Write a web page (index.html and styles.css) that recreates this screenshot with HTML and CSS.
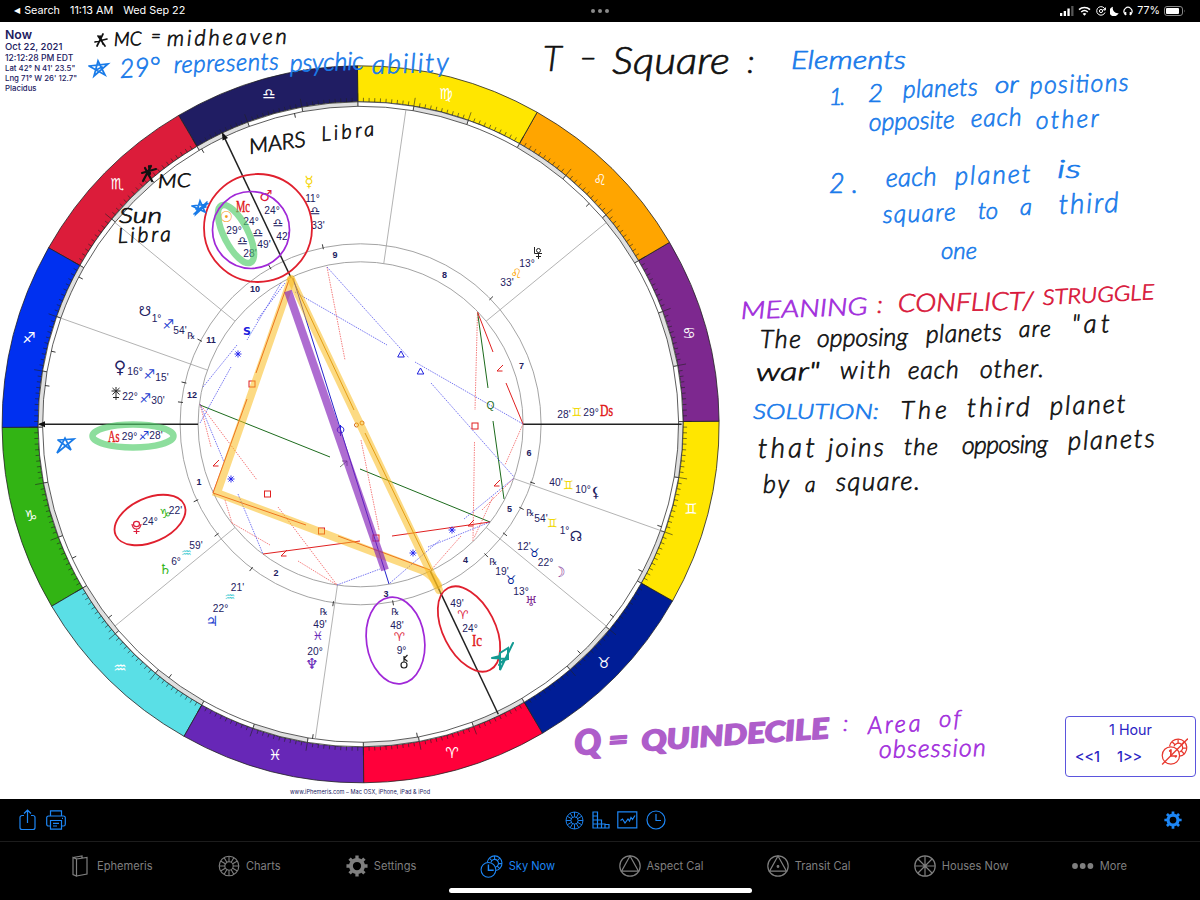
FILE: index.html
```
<!DOCTYPE html>
<html lang="en">

<head>
    <meta charset="UTF-8">
    <meta name="viewport" content="width=device-width, initial-scale=1.0">
    <title>Sky Now</title>
    <link rel="stylesheet" href="styles.css">
</head>

<body>
    <!-- shared icons -->
    <svg class="defs" width="0" height="0">
        <symbol id="wheel" viewBox="0 0 24 24">
            <g fill="none" stroke="currentColor">
                <circle cx="12" cy="12" r="10.7" />
                <circle cx="12" cy="12" r="4.6" />
                <path d="M12 1.3v6M12 16.7v6M1.3 12h6M16.7 12h6M6.6 2.8l3 5.2M14.4 16l3 5.2M2.8 6.6L8 9.6M16 14.4l5.2 3M2.8 17.4L8 14.4M16 9.6l5.2-3M6.6 21.2l3-5.2M14.4 8l3-5.2" />
            </g>
        </symbol>
        <symbol id="gear" viewBox="0 0 24 24">
            <circle cx="12" cy="12" r="6.6" fill="none" stroke="currentColor" stroke-width="4.2" />
            <path d="M12 0.5v4M12 19.5v4M0.5 12h4M19.5 12h4M3.9 3.9l2.8 2.8M17.3 17.3l2.8 2.8M3.9 20.1l2.8-2.8M17.3 6.7l2.8-2.8" stroke="currentColor" stroke-width="3.6" />
        </symbol>
        <symbol id="skynow" viewBox="0 0 24 24">
            <g fill="none" stroke="currentColor" stroke-width="1.1">
                <path d="M7.6 7.5A7.7 7.7 0 1 1 16.6 16.2" />
                <path d="M11.5 7.4A4 4 0 1 1 16.6 12.4" />
                <path d="M15.2 1v4M19 9h4M18 6l3-3M18 11.5l3 3M12.5 6l-2.5-2.5" />
                <circle cx="8.8" cy="15.5" r="7.7" />
                <path d="M8.8 10v6h5.5" stroke-width="1.5" />
            </g>
        </symbol>
    </svg>

    <header class="status-bar">
        <div class="status-left"><span class="back">◀</span><span>Search</span><span>11:13 AM</span><span>Wed Sep 22</span></div>
        <div class="dots"><i></i><i></i><i></i></div>
        <div class="status-right">
            <svg width="14" height="10" viewBox="0 0 14 10"><path d="M0 7h2.300v3H0zM3.700 5H6v5H3.700zM7.400 2.500h2.300V10H7.400z" fill="#fff" /><path d="M11.200 0h2.300v10h-2.300z" fill="#555" /></svg>
            <svg width="13" height="10" viewBox="0 0 13 10"><path d="M1 3.600a8 8 0 0 1 11 0M3.200 6a5 5 0 0 1 6.600 0" fill="none" stroke="#fff" stroke-width="1.500" /><path d="M6.500 9.800L4.600 7.800a2.800 2.800 0 0 1 3.800 0z" fill="#fff" /></svg>
            <svg width="10" height="10" viewBox="0 0 10 10"><path d="M9 6.500A4.300 4.300 0 1 1 9.200 4M9.600 1.500L9.200 4.200 6.700 3.500" fill="none" stroke="#fff" /><circle cx="5" cy="5" r="1.600" fill="none" stroke="#fff" /></svg>
            <svg width="9" height="10" viewBox="0 0 9 10"><path d="M3 .8A4.800 4.800 0 1 0 8.600 7 4.800 4.800 0 0 1 3 .8z" fill="#fff" /></svg>
            <svg width="10" height="10" viewBox="0 0 10 10"><path d="M3 9L1.600 7.500A4 4 0 1 1 8.400 7.500L7 9" fill="none" stroke="#fff" stroke-width="1.200" /><path d="M2.500 6v3M7.500 6v3" stroke="#fff" stroke-width="1.600" /></svg>
            <span>77%</span>
            <svg width="22" height="10" viewBox="0 0 22 10"><rect x=".5" y=".5" width="18" height="9" rx="2.500" fill="none" stroke="#888" /><rect x="2" y="2" width="13" height="6" rx="1" fill="#fff" /><path d="M20.200 3.500q1.200 1.500 0 3z" fill="#888" /></svg>
        </div>
    </header>

    <main class="canvas">
        <svg id="chart" class="chart" viewBox="0 22 1200 777">
            <g id="ring"></g>
            <g id="houses"></g>
            <g id="aspects"></g>
            <g id="labels"></g>
            <g id="marks" fill="none" stroke-linecap="round">
                <!-- highlighter -->
                <path class="yellow" d="M291 279L439 590" />
                <path class="yellow" d="M291 280L217 493L424 571Q434 577 438 585" />
                <path class="purple-hi" d="M288 291L385 570" />
                <ellipse class="green-hi" cx="236" cy="234" rx="12" ry="32" transform="rotate(-27 236 234)" />
                <ellipse class="green-hi" cx="133" cy="436" rx="40.500" ry="11.500" />
                <!-- pen circles -->
                <ellipse class="red-pen" cx="258" cy="228" rx="54" ry="54" />
                <ellipse class="violet-pen" cx="251" cy="230" rx="38.500" ry="38.500" />
                <ellipse class="red-pen" cx="150" cy="520" rx="37.500" ry="22" transform="rotate(-24 150 520)" />
                <ellipse class="red-pen" cx="469" cy="629" rx="26" ry="46" transform="rotate(-27 469 629)" />
                <ellipse class="violet-pen" cx="395.500" cy="640.500" rx="29" ry="43.500" transform="rotate(-8 395.500 640.500)" />
                <!-- stars -->
                <path class="blue-pen" d="M89 66L108 64L94 76L98 61L105 75L89 66M96 70l6-3" />
                <path class="blue-pen" d="M192 206L207 204L196 214L200 201L205 212L192 206M194 214L207 202M196 209L206 207" />
                <path class="blue-pen" d="M58 440L74 439L57 453L65 438L71 450L58 440" />
                <path class="teal-pen" d="M492 658L508 659L508 648L500 653L500 670L513 643M508 659Q502 660 499 665M492 658l8-2" />
                <path class="ink" d="M95 42L107 39M103 34L97 46M98 36L105 46M100 36l3 8" />
                <path class="ink bold" d="M142 173L156 169M151 166L143 181M145 168L152 181M149 166l1 8" />
            </g>
            <g id="notes"></g>
        </svg>

        <div class="info">
            <p class="now">Now</p>
            <p class="date">Oct 22, 2021</p>
            <p class="clock">12:12:28 PM EDT</p>
            <p>Lat 42° N 41' 23.5"</p>
            <p>Lng 71° W 26' 12.7"</p>
            <p>Placidus</p>
        </div>
        <p class="credit">www.iPhemeris.com – Mac OSX, iPhone, iPad &amp; iPod</p>
        <div class="stepper">
            <div class="step-title">1 Hour</div>
            <div class="step-row">
                <span>&lt;&lt;1</span><span>1&gt;&gt;</span>
                <svg class="step-icon" viewBox="0 0 24 24"><use href="#skynow" /><path d="M1 23.500L24 .5" stroke="currentColor" stroke-width="1.200" /><circle cx="8" cy="11.500" r="1" fill="currentColor" /><circle cx="13" cy="16.500" r="1" fill="currentColor" /></svg>
            </div>
        </div>
    </main>

    <div class="toolbar">
        <div class="tools">
            <svg width="17" height="22" viewBox="0 0 17 22"><path d="M5 6.500H3A2 2 0 0 0 1 8.500v10a2 2 0 0 0 2 2h11a2 2 0 0 0 2-2v-10a2 2 0 0 0-2-2h-2M8.500 14V1.200M5 4.500l3.500-3.500L12 4.500" /></svg>
            <svg width="20" height="20" viewBox="0 0 20 20"><path d="M4.500 6V.8h11V6M4.500 16H2.500a1.800 1.800 0 0 1-1.800-1.800V8A1.800 1.800 0 0 1 2.500 6h15a1.800 1.800 0 0 1 1.800 2v6.200a1.800 1.800 0 0 1-1.800 1.800h-2M4.500 10.500h11v8.700h-11zM7 13.300h6M7 16h4M16 8.300h1" /></svg>
        </div>
        <div class="tools center">
            <svg width="19" height="19"><use href="#wheel" /></svg>
            <svg width="18" height="18" viewBox="0 0 18 18"><path d="M1 1h4.500v16H1zM1 5h4.500M1 9h8.500v8M1 13h12v4M9.500 9v8H1M5.500 9v8M13 13v4H5.500M13 13.500h4V17h-4" /></svg>
            <svg width="21" height="18" viewBox="0 0 21 18"><path d="M.8.8h19v16H.8zM3.500 9.500l2-1.500 2.500 4 3-4 1.500 2 1.500-3.500 1.500 2L18 4.500" /></svg>
            <svg width="20" height="20" viewBox="0 0 20 20"><circle cx="10" cy="10" r="9" /><path d="M10 4v6.500h5" /></svg>
        </div>
        <svg class="gear" width="18" height="18"><use href="#gear" /></svg>
    </div>

    <nav class="tabs">
        <a><svg width="16" height="22" viewBox="0 0 16 22"><path d="M1 2.500L4.500 4v17L1 19.500zM4.500 4L15 2.500V19L4.500 21M1 2.500L10 1v2" /></svg>Ephemeris</a>
        <a><svg width="22" height="22"><use href="#wheel" /></svg>Charts</a>
        <a><svg width="22" height="22"><use href="#gear" /></svg>Settings</a>
        <a class="active"><svg width="23" height="23"><use href="#skynow" /></svg>Sky Now</a>
        <a><svg width="22" height="22" viewBox="0 0 22 22"><circle cx="11" cy="11" r="10.200" /><path d="M11 1L19.500 16.200H2.500z" /></svg>Aspect Cal</a>
        <a><svg width="22" height="22" viewBox="0 0 22 22"><circle cx="11" cy="11" r="10.200" /><path d="M11 1L19.500 16.200H2.500z" /><circle cx="11" cy="11.500" r=".8" /></svg>Transit Cal</a>
        <a><svg width="22" height="22" viewBox="0 0 22 22"><circle cx="11" cy="11" r="10.200" /><path d="M11 1v20M1 11h20M4 4l14 14M4 18L18 4" /></svg>Houses Now</a>
        <a><svg width="22" height="8" viewBox="0 0 22 8"><g fill="currentColor" stroke="none"><circle cx="3" cy="4" r="2.900" /><circle cx="10.700" cy="4" r="2.900" /><circle cx="18.400" cy="4" r="2.900" /></g></svg>More</a>
    </nav>
    <div class="home-bar"></div>
    <script src="chart.js"></script>
</body>

</html>
```
FILE: styles.css
```
:root {
    --blue: #1d86f5;
    --navy: #22205f;
    --gray: #7f7f7f;
}

body {
    width: 1200px;
    height: 900px;
    margin: 0;
    overflow: hidden;
    background: #000;
    font-family: Inter, "Liberation Sans", sans-serif;
    display: flex;
    flex-direction: column;
}

p {
    margin: 0;
}

.defs {
    position: absolute;
}

/* status bar */
.status-bar {
    height: 22px;
    display: grid;
    grid-template-columns: 1fr auto 1fr;
    align-items: center;
    color: #fff;
    font-size: 10.8px;
    box-sizing: border-box;
    padding: 0 14px 1px 14px;
}

.status-left {
    display: flex;
    align-items: center;
    gap: 10px;
}

.status-left .back {
    font-family: "DejaVu Sans", sans-serif;
    font-size: 8px;
    margin-right: -6px;
}

.dots {
    display: flex;
    gap: 3px;
}

.dots i {
    width: 4px;
    height: 4px;
    border-radius: 50%;
    background: #8a8a8a;
}

.status-right {
    display: flex;
    justify-content: flex-end;
    align-items: center;
    gap: 4.2px;
    font-size: 10.6px;
}

/* chart area */
.canvas {
    height: 777px;
    background: #fff;
    position: relative;
}

.chart {
    display: block;
    width: 1200px;
    height: 777px;
}

.info {
    position: absolute;
    left: 5px;
    top: 6px;
    color: var(--navy);
    font-size: 7.8px;
    font-weight: 500;
    line-height: 9.8px;
    white-space: nowrap;
}

.info .now {
    font-size: 12.3px;
    line-height: 13px;
    font-weight: 600;
}

.info .date {
    font-size: 9.5px;
    line-height: 12px;
}

.info .clock {
    font-size: 8.6px;
    line-height: 11px;
}

.credit {
    position: absolute;
    left: 290px;
    top: 766px;
    font-size: 5.6px;
    line-height: 8px;
    letter-spacing: 0.02px;
    color: var(--navy);
    white-space: nowrap;
}

.stepper {
    position: absolute;
    left: 1065px;
    top: 694px;
    width: 131px;
    height: 61px;
    box-sizing: border-box;
    border: 1.5px solid #5b55dd;
    border-radius: 4px;
    color: #2b25c4;
    font-size: 14.3px;
    padding: 4px 7px 0 9px;
}

.step-title {
    text-align: center;
    line-height: 17px;
    margin-right: 2px;
}

.step-row {
    display: flex;
    align-items: center;
    gap: 17px;
    font-weight: 500;
    height: 36px;
}

.step-icon {
    width: 27px;
    height: 27px;
    margin: -9px 0 0 auto;
    color: #e8392f;
}

/* drawing */
.yellow {
    stroke: rgba(250, 188, 30, 0.55);
    stroke-width: 8;
}

.purple-hi {
    stroke: rgba(130, 30, 185, 0.65);
    stroke-width: 8;
    stroke-linecap: butt;
}

.green-hi {
    stroke: rgba(80, 205, 105, 0.65);
    stroke-width: 6.5;
}

.red-pen {
    stroke: #e0202e;
    stroke-width: 1.8;
}

.violet-pen {
    stroke: #a028d8;
    stroke-width: 1.7;
}

.blue-pen {
    stroke: #197be8;
    stroke-width: 1.7;
}

.teal-pen {
    stroke: #129a92;
    stroke-width: 2;
}

.ink {
    stroke: #111;
    stroke-width: 1.7;
}

.ink.bold {
    stroke-width: 2.2;
}

.glyph {
    font-family: "DejaVu Sans", sans-serif;
    text-anchor: middle;
}

.num {
    font-family: "Liberation Sans", Arial, sans-serif;
    font-size: 10.2px;
    fill: var(--navy);
    text-anchor: middle;
}

.house {
    font-size: 9px;
    font-weight: bold;
}

.angle {
    font-family: "Liberation Serif", serif;
    font-size: 16px;
    fill: #e01515;
    stroke: #e01515;
    stroke-width: 0.4;
}

.hand {
    font-family: Lato, sans-serif;
    font-style: italic;
    font-weight: 300;
    stroke-width: 0.7;
    stroke-linejoin: round;
}

.marker {
    font-weight: 900;
    stroke-width: 1.5;
    opacity: 0.8;
}

/* bottom bars */
.toolbar {
    height: 43px;
    box-sizing: border-box;
    padding: 0 18px 0 19px;
    display: grid;
    grid-template-columns: 1fr auto 1fr;
    align-items: center;
    border-bottom: 1px solid #1c1c1c;
    color: var(--blue);
}

.toolbar svg,
.tabs svg {
    fill: none;
    stroke: currentColor;
    stroke-width: 1.2;
}

.tools {
    display: flex;
    align-items: center;
    gap: 10px;
}

.tools.center {
    gap: 7.5px;
    padding-left: 30px;
}

.toolbar .gear {
    justify-self: end;
}

.tabs {
    height: 48px;
    padding: 0 73px 0 72px;
    display: flex;
    justify-content: space-between;
    align-items: center;
    color: var(--gray);
    font-size: 11.1px;
}

.tabs a {
    display: flex;
    align-items: center;
    gap: 5.5px;
}

.tabs a:first-child {
    gap: 9px;
    margin-right: 2px;
}

.tabs a:nth-child(2) {
    margin-right: 2px;
}

.tabs .active {
    color: var(--blue);
}

.home-bar {
    width: 303px;
    height: 5px;
    margin: -2px auto 0;
    border-radius: 3px;
    background: #fff;
}
```
FILE: chart.js
```
const CX = 360.6;
const CY = 424.3;
const START = 180.5;   // 0 degrees Capricorn

const ring = document.querySelector('#ring');
const houses = document.querySelector('#houses');
const aspects = document.querySelector('#aspects');
const labels = document.querySelector('#labels');
const notes = document.querySelector('#notes');

function add(parent, tag, attrs, text) {
    const el = document.createElementNS('http://www.w3.org/2000/svg', tag);
    for (const key in attrs) el.setAttribute(key, attrs[key]);
    if (text) el.textContent = text;
    parent.appendChild(el);
    return el;
}

function point(deg, r) {
    const a = deg * Math.PI / 180;
    return [CX + r * Math.cos(a), CY - r * Math.sin(a)];
}

function slice(from, to, inner, outer, fill, stroke) {
    const a = point(from, outer), b = point(to, outer), c = point(to, inner), d = point(from, inner);
    add(ring, 'path', {
        d: `M${a}A${outer} ${outer} 0 0 0 ${b}L${c}A${inner} ${inner} 0 0 1 ${d}Z`,
        fill: fill, stroke: stroke, 'stroke-width': 0.8
    });
}

function spoke(parent, deg, r1, r2, stroke, width) {
    const a = point(deg, r1), b = point(deg, r2);
    add(parent, 'line', { x1: a[0], y1: a[1], x2: b[0], y2: b[1], stroke: stroke, 'stroke-width': width });
}

function glyph(text, x, y, size, fill) {
    // \uFE0E keeps the zodiac signs out of emoji style
    add(labels, 'text', { class: 'glyph', x: x, y: y + size * 0.36, 'font-size': size, fill: fill }, text + '\uFE0E');
}

/***************** zodiac ring *****************/
const signs = [
    ['♑', '#32b414', 31, 516], ['♒', '#5adfe6', 120, 668], ['♓', '#6727b7', 275, 755],
    ['♈', '#ff003a', 452, 753], ['♉', '#001d96', 604, 663], ['♊', '#ffe600', 691, 509],
    ['♋', '#7d288f', 689, 333], ['♌', '#ffa500', 600, 180], ['♍', '#ffe600', 446, 94],
    ['♎', '#201d63', 269, 94], ['♏', '#dc1c3a', 117, 184], ['♐', '#0030f0', 29, 338]
];
signs.forEach((s, i) => {
    slice(START + i * 30, START + i * 30 + 30, 322.5, 358.5, s[1], '#222');
    glyph(s[0], s[2], s[3], 15, '#fff');
});
for (let i = 0; i < 36; i++) {
    slice(START + i * 10, START + i * 10 + 10, 318, 322.5, i % 2 ? '#e0e0e0' : '#fff', '#333');
}
for (let i = 0; i < 360; i++) {
    spoke(ring, START + i, 322.5, i % 10 == 0 ? 331 : 326.5, '#222', 0.6);
}

/***************** houses *****************/
add(houses, 'circle', { cx: CX, cy: CY, r: 180.5, fill: 'none', stroke: '#999', 'stroke-width': 0.9 });
add(houses, 'circle', { cx: CX, cy: CY, r: 162.5, fill: 'none', stroke: '#999', 'stroke-width': 0.9 });
[39.4, 81.8, 140.6, 160.5, 219.4, 261.8, 320.6, 340.5].forEach(d => spoke(houses, d, 162.5, 318, '#a0a0a0', 0.8));
[0, 115.4, 180, 295.4].forEach(d => spoke(houses, d, 162.5, 321, '#222', 1.5));
add(houses, 'path', { d: 'M38 424.300l7-3v6z', fill: '#111' });
add(houses, 'path', { d: 'M222 132l6 6-5.500 2.500z', fill: '#111' });

[120, 102, 217.5, 232.9, 261.3, 280.3, 313.8, 322.7, 332.4, 341.2, 44, 152.4, 166.7, 173, 204.9].forEach(d => {
    spoke(houses, d, 179, 184, '#222', 0.9);
    spoke(houses, d, 313.5, 318, '#222', 0.9);
});

[['10', 255, 289], ['9', 335, 255], ['8', 444.5, 275], ['7', 521.5, 366], ['6', 529, 453], ['5', 509.5, 509],
['4', 465.5, 560], ['3', 386, 594], ['2', 276, 573], ['1', 199, 482], ['12', 192, 395], ['11', 211, 340]].forEach(h => {
    add(labels, 'text', { class: 'num house', x: h[1], y: h[2] + 3.2 }, h[0]);
});

/***************** aspects *****************/
function aspect(color, dash, coords) {
    for (let i = 0; i < coords.length; i += 4) {
        const [x1, y1, x2, y2] = coords.slice(i, i + 4);
        add(aspects, 'line', {
            x1: x1, y1: y1, x2: x2, y2: y2, stroke: color,
            'stroke-width': dash ? 0.8 : 1, 'stroke-dasharray': dash ? '1.5 1' : 'none'
        });
    }
}
aspect('#1c6b1c', false, [200, 405, 330, 457, 360, 469, 490, 522, 477.5, 312, 488, 388, 493, 421, 504, 499]);
aspect('#e02020', false, [477.5, 312, 493, 352, 506, 383, 523, 424, 289, 280, 256, 373, 247, 399, 213, 493,
    213, 493, 306, 525, 338, 536, 430, 570, 263, 554, 360, 541, 392, 536, 490, 522]);
aspect('#c87808', false, [292, 278, 354, 410, 365, 433, 432, 571]);
aspect('#2222cc', false, [293, 278, 389, 584]);
aspect('#f26060', true, [477.5, 312, 475, 410, 474.5, 442, 473, 541, 327, 267, 345, 360, 361, 440, 379, 530,
    200, 404, 257, 480, 278, 507, 337, 585, 200, 404, 211, 447, 225, 500, 232, 523, 232, 523, 270, 545, 298, 561, 337, 585,
    432, 569, 461, 536, 482, 510, 514, 478, 523, 424, 505, 465, 493, 497, 474, 538]);
aspect('#5555ee', true, [327, 267, 409, 358, 431, 383, 514, 477, 295, 292, 387, 345, 415, 362, 523, 424,
    281, 283, 247, 340, 285, 283, 257, 320, 203, 387, 237, 345, 200, 423, 231, 367, 200, 404, 224, 462, 238, 494, 263, 554,
    337, 585, 380, 569, 428, 547, 490, 522, 390, 583, 440, 540, 464, 519, 514, 478]);

[[252, 384], [267.5, 494], [321.5, 531], [376, 538], [475, 426]].forEach(s => {
    add(aspects, 'rect', { x: s[0] - 3, y: s[1] - 3, width: 6, height: 6, fill: 'none', stroke: '#e02020' });
});
[[401, 354], [420.500, 371]].forEach(t => {
    add(aspects, 'path', { d: `M${t[0]} ${t[1] - 3}l3.300 6h-6.600z`, fill: 'none', stroke: '#2020dd' });
});
[[216, 463], [284, 553], [500, 368], [471, 523], [497, 483]].forEach(t => {
    add(aspects, 'path', { d: `M${t[0] + 3} ${t[1] - 3}L${t[0] - 3} ${t[1] + 3}h5.500`, fill: 'none', stroke: '#e02020' });
});
[[238, 354], [231, 479], [413, 553], [452, 530]].forEach(t => {
    add(aspects, 'path', {
        d: `M${t[0]} ${t[1] - 3.5}v7M${t[0] - 3.5} ${t[1]}h7M${t[0] - 2.5} ${t[1] - 2.5}l5 5M${t[0] - 2.5} ${t[1] + 2.5}l5-5`,
        stroke: '#2020ee', 'stroke-width': 0.9
    });
});
add(aspects, 'text', { class: 'num', x: 490.5, y: 408.500, style: 'fill:#1c6b1c' }, 'Q');
add(aspects, 'text', { class: 'glyph', x: 247, y: 335, 'font-size': 11, 'font-weight': 'bold', fill: '#2020dd' }, 'S');
add(aspects, 'path', { d: 'M340 467l7-6M342 461h5v5', fill: 'none', stroke: '#555', 'stroke-width': 0.8 });
add(aspects, 'path', { d: 'M340.500 426.500a3.300 3.300 0 1 0 .1 0M340.500 425v11', fill: 'none', stroke: '#2020dd' });
add(aspects, 'path', { d: 'M354.500 425a2 2 0 1 0 4 0a2 2 0 1 0-4 0M360 423a2 2 0 1 0 4 0a2 2 0 1 0-4 0', fill: 'none', stroke: '#d06010' });

/***************** planets *****************/
const purple = '#6727b7', red = '#dc1c3a', blue = '#1d3ed0', yellow = '#f0d800', navy = '#22205f', aqua = '#45ccd4', green = '#32b414';
[['☉', 226.5, 217, 15, '#f59a1b'], ['♂', 266, 196, 15, red], ['☿', 309, 182, 15, '#f5d400'],
['♎', 242.5, 241, 12, navy], ['♎', 258, 233, 12, navy], ['♎', 278, 223, 12, navy], ['♎', 315, 211, 12, navy],
['☋', 145, 311, 14, navy], ['♐', 168, 324, 13, blue], ['℞', 191, 336, 9, navy],
['♀', 120, 367, 17, navy], ['♐', 149, 374, 13, blue], ['♐', 145, 398, 13, blue],
['♐', 144, 436, 12, blue], ['♑', 165, 513, 13, green],
['♄', 165, 569, 14, green], ['♒', 186.5, 553, 12, aqua], ['♒', 230, 597, 12, aqua], ['♃', 212, 621, 14, blue],
['℞', 323.5, 612, 9, navy], ['♓', 318, 636, 12, purple], ['♆', 312, 664, 15, purple],
['℞', 395, 612, 9, navy], ['♈', 399.5, 637, 12, red], ['♈', 463, 615, 12, red],
['℞', 493, 562, 9, navy], ['♉', 511, 580, 12, '#001d96'], ['♅', 531, 601, 14, '#7d288f'],
['♉', 534.5, 553, 12, '#001d96'], ['☽', 559, 572, 14, '#7d288f'],
['℞', 530, 513, 9, navy], ['♊', 552.5, 523, 12, yellow], ['☊', 576, 536, 14, navy],
['♊', 568.5, 485, 12, yellow], ['⚸', 596, 492, 14, navy], ['♊', 577, 412, 12, yellow],
['♌', 516, 273, 13, '#ffa500']].forEach(g => glyph(...g));
// pluto
add(labels, 'path', { d: 'M133.500 524a3 2.700 0 1 0 6 0a3 2.700 0 1 0-6 0M132 524q.5 5 4.500 5t4.500-5M136.500 529v5M133.500 531.500h6', fill: 'none', stroke: red, 'stroke-width': 1.2 });
// juno, chiron, pallas
add(labels, 'path', { d: 'M116 387v13M111.500 391h9M112.500 388l7 6.500M119.500 388l-7 6.500M113 397.500h6', fill: 'none', stroke: '#222', 'stroke-width': 1 });
add(labels, 'path', { d: 'M401 665a3 3 0 1 0 6 0a3 3 0 1 0-6 0M404 662v-6M407.500 655l-3.500 3.500 3.500 3', fill: 'none', stroke: '#222', 'stroke-width': 1.2 });
add(labels, 'path', { d: 'M534.500 247v6.500h7.500M536.500 250.500a2 2 0 1 0 4 0a2 2 0 1 0-4 0M538.500 253v6M536 256.500h5', fill: 'none', stroke: '#222', 'stroke-width': 1 });

[['29°', 234, 230], ["28'", 250, 253], ['24°', 251, 221], ["49'", 264, 244.5], ['24°', 272, 210], ["42'", 283, 236],
['11°', 312.5, 198.5], ["33'", 318, 225], ['1°', 156.5, 318], ["54'", 180, 330], ['16°', 135, 371], ["15'", 162, 377.500],
['22°', 130, 396.500], ["30'", 158, 400], ['29°', 129.500, 436], ["28'", 156, 435], ['24°', 150, 521.500], ["22'", 175.500, 510],
['6°', 176, 561], ["59'", 196, 545.500], ["21'", 237.500, 587], ['22°', 220.500, 608.500], ["49'", 320, 624], ['20°', 315, 651.500],
["48'", 397, 625], ['9°', 401.500, 650], ["49'", 457, 603.500], ['24°', 470, 628], ["19'", 502, 571.500], ['13°', 521, 591],
["12'", 524, 546.500], ['22°', 545.500, 562.500], ["54'", 541, 518.500], ['1°', 564.500, 530.500], ["40'", 556, 482], ['10°', 583, 489.500],
["28'", 564, 414], ['29°', 591, 412], ["33'", 507, 282.500], ['13°', 527, 263.500]].forEach(n => {
    add(labels, 'text', { class: 'num', x: n[1], y: n[2] + 3.6 }, n[0]);
});
[['Mc', 236, 212, 14], ['As', 108, 442, 11.5], ['Ds', 600, 416, 13], ['Ic', 472, 646, 10]].forEach(a => {
    add(labels, 'text', { class: 'angle', x: a[1], y: a[2], textLength: a[3], lengthAdjust: 'spacingAndGlyphs' }, a[0]);
});

/***************** handwriting: word, x, baseline, width, size, color, tilt *****************/
const ink = '#111', pen = '#1a7bea', violet = '#a22fdc', crimson = '#d8173a';
const stretched = ['MC', 'MEANING', 'Sun', 'SOLUTION:', 'MARS', 'CONFLICT/', 'STRUGGLE', 'Square', 'Elements', 'war"', 'is', 'or'];
[['MC', 114, 46, 28, 19, ink, -2], ['=', 151, 42, 9, 17, ink, 0], ['midheaven', 167, 46, 120, 22, ink, -1],
['29°', 120, 78, 41, 26, pen, -4], ['represents', 174, 73, 105, 24, pen, -2], ['psychic', 290, 72, 74, 25, pen, -2], ['ability', 372, 74, 77, 27, pen, -2],
['MARS', 250, 154, 57, 21, ink, -8], ['Libra', 322, 141, 53, 20, ink, -6], ['MC', 158, 188, 33, 19, ink, -2],
['Sun', 119, 223, 43, 21, ink, 0], ['Libra', 118, 243, 53, 21, ink, -2],
['T', 543, 71, 24, 35, ink, 0], ['–', 579, 68, 18, 32, ink, 0], ['Square', 612, 74, 118, 37, ink, 0], [':', 747, 73, 9, 32, ink, 0],
['Elements', 791, 69, 115, 26, pen, 0],
['1', 829, 105, 12, 23, pen, 0], ['.', 840, 105, 6, 23, pen, 0], ['2', 868, 102, 17, 26, pen, 0], ['planets', 903, 98, 75, 25, pen, -2], ['or', 995, 93, 24, 23, pen, -2], ['positions', 1030, 94, 99, 25, pen, -2],
['opposite', 869, 131, 86, 25, pen, -2], ['each', 971, 127, 51, 25, pen, -2], ['other', 1036, 129, 63, 25, pen, -2],
['2.', 829, 193, 29, 27, pen, 0], ['each', 886, 187, 51, 26, pen, -2], ['planet', 955, 185, 76, 26, pen, -2], ['is', 1057, 178, 24, 26, pen, 0],
['square', 883, 223, 73, 25, pen, -2], ['to', 978, 219, 20, 24, pen, 0], ['a', 1020, 215, 16, 24, pen, 0], ['third', 1059, 214, 60, 28, pen, -2],
['one', 941, 259, 36, 24, pen, 0],
['MEANING', 741, 319, 127, 24, violet, -2], [':', 877, 313, 8, 24, crimson, 0], ['CONFLICT/', 898, 312, 136, 25, crimson, -1], ['STRUGGLE', 1043, 305, 112, 21, crimson, -3],
['The', 760, 348, 41, 25, ink, 0], ['opposing', 817, 347, 91, 25, ink, -1], ['planets', 926, 343, 76, 25, ink, -2], ['are', 1019, 337, 32, 23, ink, -1], ['"at', 1072, 333, 38, 26, ink, -1],
['war"', 756, 381, 64, 25, ink, -1], ['with', 840, 379, 51, 25, ink, -1], ['each', 908, 379, 51, 25, ink, -1], ['other.', 980, 378, 64, 25, ink, -1],
['SOLUTION:', 753, 419, 126, 22, pen, 0], ['The', 901, 419, 46, 25, ink, -1], ['third', 967, 417, 63, 27, ink, -1], ['planet', 1050, 415, 76, 26, ink, -2],
['that', 758, 458, 57, 28, ink, -1], ['joins', 828, 457, 56, 26, ink, -1], ['the', 904, 455, 34, 24, ink, 0], ['opposing', 962, 454, 86, 25, ink, -1], ['planets', 1068, 450, 87, 26, ink, -2],
['by', 763, 493, 26, 25, ink, 0], ['a', 805, 492, 11, 21, ink, 0], ['square.', 836, 491, 84, 26, ink, -1],
[':', 843, 731, 8, 22, violet, 0], ['Area', 868, 734, 53, 24, violet, -3], ['of', 939, 727, 22, 24, violet, 0], ['obsession', 879, 758, 107, 25, violet, -1]
].forEach(w => {
    add(notes, 'text', {
        class: 'hand', x: w[1], y: w[2], textLength: w[3],
        lengthAdjust: stretched.includes(w[0]) ? 'spacingAndGlyphs' : 'spacing',
        'font-size': w[4], fill: w[5], stroke: w[5], transform: `rotate(${w[6]} ${w[1]} ${w[2]})`
    }, w[0]);
});
[['Q', 575, 755, 27, 34], ['=', 609, 750, 20, 28], ['QUINDECILE', 642, 751, 188, 28]].forEach(w => {
    add(notes, 'text', {
        class: 'hand marker', x: w[1], y: w[2], textLength: w[3], lengthAdjust: 'spacingAndGlyphs',
        'font-size': w[4], fill: '#9a35bd', stroke: '#9a35bd', transform: `rotate(-4 ${w[1]} ${w[2]})`
    }, w[0]);
});
```
